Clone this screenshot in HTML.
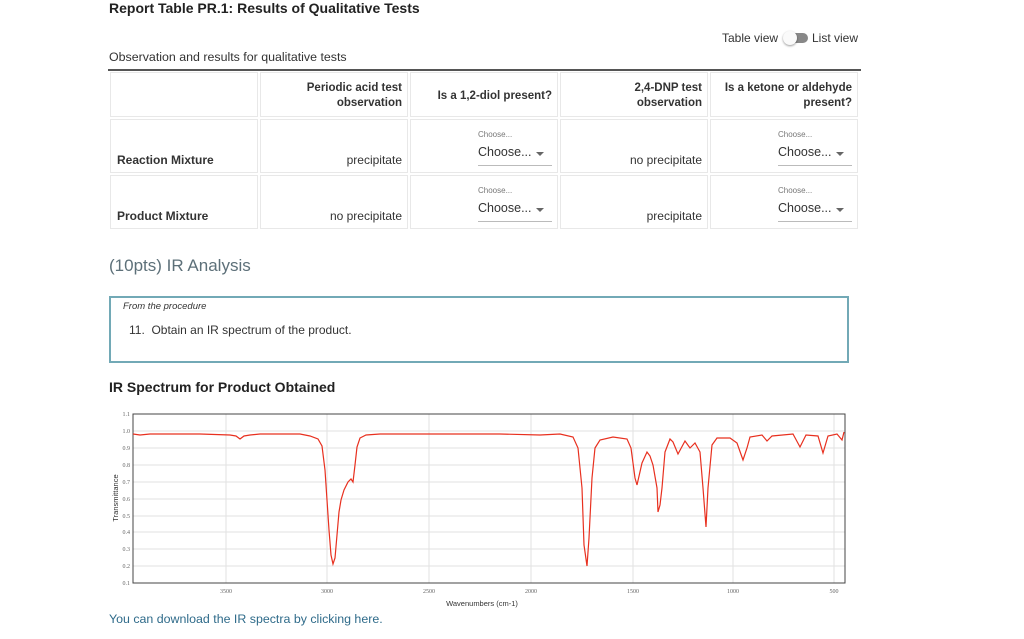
<!DOCTYPE html>
<html><head><meta charset="utf-8"><style>
*{margin:0;padding:0;box-sizing:border-box}
body{width:1024px;height:639px;background:#fff;font-family:"Liberation Sans",sans-serif;color:#222;position:relative;overflow:hidden}
.a{position:absolute;white-space:nowrap}
.cell{position:absolute;border:1px solid #e8e8e8;background:#fff}
.h{font-weight:bold;font-size:11.5px;text-align:right;line-height:15px;color:#333}
.t{font-size:12px;color:#333}
.sel{position:absolute;width:74px;border-bottom:1px solid #bbb}
.sel .s{font-size:8px;color:#777;position:absolute;top:-17px;left:0}
.sel .m{font-size:12.5px;color:#333;position:absolute;top:-2px;left:0}
.sel .ar{position:absolute;right:8px;top:5px;width:0;height:0;border-left:4px solid transparent;border-right:4px solid transparent;border-top:4px solid #666}
</style></head><body>
<div class="a" style="left:109px;top:0px;font-size:14px;font-weight:bold;color:#222">Report Table PR.1: Results of Qualitative Tests</div>
<div class="a" style="left:722px;top:31px;font-size:12px;color:#333">Table view</div>
<div class="a" style="left:786px;top:33px;width:22px;height:10px;border-radius:5px;background:#888"></div>
<div class="a" style="left:783px;top:31px;width:14px;height:14px;border-radius:7px;background:#fafafa;box-shadow:0 1px 2px rgba(0,0,0,.4)"></div>
<div class="a" style="left:812px;top:31px;font-size:12px;color:#333">List view</div>
<div class="a" style="left:109px;top:50px;font-size:12.4px;color:#333">Observation and results for qualitative tests</div>
<div class="a" style="left:108px;top:69px;width:753px;height:2px;background:#555"></div>

<div class="cell" style="left:110px;top:72px;width:148px;height:45px"></div>
<div class="cell" style="left:260px;top:72px;width:148px;height:45px"></div>
<div class="cell" style="left:410px;top:72px;width:148px;height:45px"></div>
<div class="cell" style="left:560px;top:72px;width:148px;height:45px"></div>
<div class="cell" style="left:710px;top:72px;width:148px;height:45px"></div>
<div class="cell" style="left:110px;top:119px;width:148px;height:54px"></div>
<div class="cell" style="left:260px;top:119px;width:148px;height:54px"></div>
<div class="cell" style="left:410px;top:119px;width:148px;height:54px"></div>
<div class="cell" style="left:560px;top:119px;width:148px;height:54px"></div>
<div class="cell" style="left:710px;top:119px;width:148px;height:54px"></div>
<div class="cell" style="left:110px;top:175px;width:148px;height:54px"></div>
<div class="cell" style="left:260px;top:175px;width:148px;height:54px"></div>
<div class="cell" style="left:410px;top:175px;width:148px;height:54px"></div>
<div class="cell" style="left:560px;top:175px;width:148px;height:54px"></div>
<div class="cell" style="left:710px;top:175px;width:148px;height:54px"></div>

<div class="a h" style="right:622px;top:81px">Periodic acid test<br>observation</div>
<div class="a h" style="right:472px;top:89px">Is a 1,2-diol present?</div>
<div class="a h" style="right:322px;top:81px">2,4-DNP test<br>observation</div>
<div class="a h" style="right:172px;top:81px">Is a ketone or aldehyde<br>present?</div>

<div class="a t" style="left:117px;top:153px;font-weight:bold">Reaction Mixture</div>
<div class="a t" style="right:622px;top:153px">precipitate</div>
<div class="a t" style="right:322px;top:153px">no precipitate</div>
<div class="a t" style="left:117px;top:209px;font-weight:bold">Product Mixture</div>
<div class="a t" style="right:622px;top:209px">no precipitate</div>
<div class="a t" style="right:322px;top:209px">precipitate</div>

<div class="sel" style="left:478px;top:147px;height:19px"><span class="s">Choose...</span><span class="m">Choose...</span><span class="ar"></span></div>
<div class="sel" style="left:778px;top:147px;height:19px"><span class="s">Choose...</span><span class="m">Choose...</span><span class="ar"></span></div>
<div class="sel" style="left:478px;top:203px;height:19px"><span class="s">Choose...</span><span class="m">Choose...</span><span class="ar"></span></div>
<div class="sel" style="left:778px;top:203px;height:19px"><span class="s">Choose...</span><span class="m">Choose...</span><span class="ar"></span></div>

<div class="a" style="left:109px;top:256px;font-size:17px;color:#5d7079">(10pts) IR Analysis</div>
<div class="a" style="left:109px;top:296px;width:740px;height:67px;border:2px solid #72a9b6"></div>
<div class="a" style="left:123px;top:301px;font-size:9.5px;font-style:italic;color:#333">From the procedure</div>
<div class="a" style="left:129px;top:323px;font-size:12px;color:#333">11.&nbsp; Obtain an IR spectrum of the product.</div>
<div class="a" style="left:109px;top:379px;font-size:14px;font-weight:bold;color:#222">IR Spectrum for Product Obtained</div>

<svg class="a" style="left:0;top:0" width="1024" height="639">
<g stroke="#e2e2e2" stroke-width="1">
<line x1="133" x2="845" y1="431" y2="431"/><line x1="133" x2="845" y1="448" y2="448"/><line x1="133" x2="845" y1="465" y2="465"/><line x1="133" x2="845" y1="482" y2="482"/><line x1="133" x2="845" y1="499" y2="499"/><line x1="133" x2="845" y1="516" y2="516"/><line x1="133" x2="845" y1="532" y2="532"/><line x1="133" x2="845" y1="549" y2="549"/><line x1="133" x2="845" y1="566" y2="566"/>
<line x1="226" x2="226" y1="414" y2="583"/><line x1="327" x2="327" y1="414" y2="583"/><line x1="429" x2="429" y1="414" y2="583"/><line x1="531" x2="531" y1="414" y2="583"/><line x1="633" x2="633" y1="414" y2="583"/><line x1="733" x2="733" y1="414" y2="583"/><line x1="834" x2="834" y1="414" y2="583"/>
</g>
<rect x="133" y="414" width="712" height="169" fill="none" stroke="#444" stroke-width="1"/>
<g font-family="Liberation Serif,serif" font-size="6" fill="#666" text-anchor="end">
<text x="130" y="416">1.1</text><text x="130" y="433">1.0</text><text x="130" y="450">0.9</text><text x="130" y="467">0.8</text><text x="130" y="484">0.7</text><text x="130" y="501">0.6</text><text x="130" y="518">0.5</text><text x="130" y="534">0.4</text><text x="130" y="551">0.3</text><text x="130" y="568">0.2</text><text x="130" y="585">0.1</text>
</g>
<g font-family="Liberation Serif,serif" font-size="6" fill="#666" text-anchor="middle">
<text x="226" y="593">3500</text><text x="327" y="593">3000</text><text x="429" y="593">2500</text><text x="531" y="593">2000</text><text x="633" y="593">1500</text><text x="733" y="593">1000</text><text x="834" y="593">500</text>
</g>
<text x="482" y="606" font-size="7.5" fill="#333" text-anchor="middle">Wavenumbers (cm-1)</text>
<text transform="translate(118,498) rotate(-90)" font-size="7.5" fill="#333" text-anchor="middle">Transmittance</text>
<polyline fill="none" stroke="#e8301f" stroke-width="1.2" points="133,434 140,435 150,434 170,434 200,434 230,435 236,436 240,439 244,436 250,435 260,434 280,434 300,434 310,436 318,439 322,446 325,470 327,500 329,530 331,555 333,564 335,558 337,535 339,512 341,500 344,490 348,482 351,479 353,482 355,465 357,447 360,438 366,435 380,434 420,434 500,434 540,435 560,434 573,437 578,448 582,488 584,545 587,566 589,538 592,478 595,448 600,440 613,437 627,439 631,448 635,478 637,485 642,463 647,452 650,456 653,465 657,488 658,512 660,505 662,488 665,452 670,439 673,442 678,454 685,441 690,448 695,443 700,452 703,488 706,527 708,488 712,445 717,438 730,438 737,443 743,460 747,448 750,437 762,435 767,441 772,436 793,434 800,447 806,435 818,436 823,453 828,436 837,434 842,440 844,432"/>
</svg>
<div class="a" style="left:109px;top:612px;font-size:12.4px;color:#2f6b8a">You can download the IR spectra by clicking here.</div>
</body></html>
